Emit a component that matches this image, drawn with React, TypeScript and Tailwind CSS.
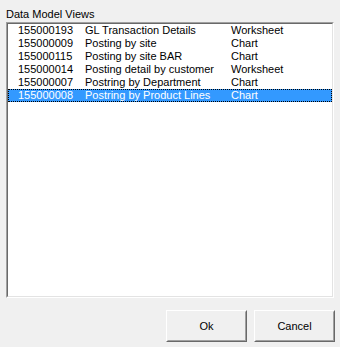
const rows = [
  { id: "155000193", name: "GL Transaction Details", type: "Worksheet" },
  { id: "155000009", name: "Posting by site", type: "Chart" },
  { id: "155000115", name: "Posting by site BAR", type: "Chart" },
  { id: "155000014", name: "Posting detail by customer", type: "Worksheet" },
  { id: "155000007", name: "Postring by Department", type: "Chart" },
  { id: "155000008", name: "Postring by Product Lines", type: "Chart" },
];

const font = { fontFamily: '"Liberation Sans", Arial, sans-serif' };

const WinButton = ({ label }: { label: string }) => (
  <div className="w-[81px] h-[32px] border border-t-white border-l-white border-r-[#696969] border-b-[#696969]">
    <div className="w-full h-full flex items-center justify-center border border-t-[#f0f0f0] border-l-[#f0f0f0] border-r-[#a0a0a0] border-b-[#a0a0a0] bg-[#f0f0f0] text-[11px] text-black">
      {label}
    </div>
  </div>
);

export default function App() {
  const selected = 5;

  return (
    <div
      className="w-[340px] h-[347px] bg-[#f0f0f0] flex flex-col pt-[8px] pl-[6px]"
      style={font}
    >
      {/* Label */}
      <div className="h-[13px] leading-[13px] text-[11px] text-black">
        Data Model Views
      </div>

      {/* List box */}
      <div className="mt-[1px] w-[328px] h-[276px] border border-t-[#a0a0a0] border-l-[#a0a0a0] border-r-white border-b-white">
        <div className="w-full h-full bg-white border border-t-[#696969] border-l-[#696969] border-r-[#e3e3e3] border-b-[#e3e3e3]">
          {rows.map((r, i) => (
            <div
              key={r.id}
              className={
                i === selected
                  ? "flex h-[13px] items-center text-[11px] leading-[13px] bg-[#3399ff] text-white outline-1 outline-dotted outline-offset-[-1px] outline-black"
                  : "flex h-[13px] items-center text-[11px] leading-[13px] text-black"
              }
            >
              <span className="w-[77px] pl-[10px] shrink-0">{r.id}</span>
              <span className="w-[146px] shrink-0">{r.name}</span>
              <span>{r.type}</span>
            </div>
          ))}
        </div>
      </div>

      {/* Buttons */}
      <div className="mt-[12px] w-[329px] flex justify-end gap-[7px]">
        <WinButton label="Ok" />
        <WinButton label="Cancel" />
      </div>
    </div>
  );
}
